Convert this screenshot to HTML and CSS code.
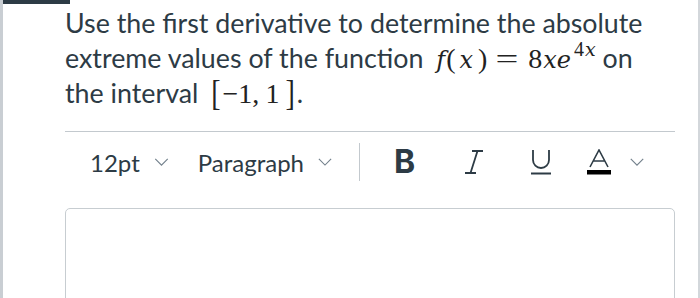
FILE: index.html
```html
<!DOCTYPE html>
<html>
<head>
<meta charset="utf-8">
<link rel="stylesheet" href="styles.css">
</head>
<body>
<div class="frame">
  <div class="tab"></div>
  <div class="content">
    <p class="question">Use the first derivative to determine the absolute extreme values of the function <span class="math"><i class="mf">f</i><span class="rm">(</span><i class="mx1">x</i><span class="rm">)</span><span class="rel">=</span><span class="rm">8</span><i class="mx2">x</i><i class="me">e</i><sup><span class="rm">4</span><i>x</i></sup></span> on the interval <span class="math"><span class="br">[</span><span class="rm">−1,</span><span class="rm one">1</span><span class="br">]</span></span>.</p>
    <div class="rule"></div>
    <div class="toolbar">
      <span class="drop size">12pt <svg class="chev" viewBox="0 0 16 9" width="15" height="8"><path d="M1 1l7 7 7-7" fill="none" stroke="#73818c" stroke-width="1.3"/></svg></span>
      <span class="drop para">Paragraph <svg class="chev" viewBox="0 0 16 9" width="14" height="8"><path d="M1 1l7 7 7-7" fill="none" stroke="#73818c" stroke-width="1.3"/></svg></span>
      <span class="sep"></span>
      <span class="btn bold">B</span>
      <svg class="btn ital" viewBox="0 0 20 24" width="20" height="24"><path d="M8 1h11M1 23h11M13.5 1L6.5 23" fill="none" stroke="#2d3b45" stroke-width="1.8"/></svg>
      <svg class="btn under" viewBox="0 0 22 26" width="22" height="26"><path d="M3 1v10a8 8 0 0 0 16 0V1" fill="none" stroke="#2d3b45" stroke-width="1.8"/><path d="M1 24.5h20" stroke="#2d3b45" stroke-width="2"/></svg>
      <svg class="btn color" viewBox="0 0 26 26" width="26" height="26"><path d="M4 18L13 1l9 17M7 12h12" fill="none" stroke="#2d3b45" stroke-width="1.6"/><rect x="1" y="21" width="24" height="4.5" fill="#000"/></svg>
      <svg class="chev last" viewBox="0 0 16 9" width="16" height="8"><path d="M1 1l7 7 7-7" fill="none" stroke="#73818c" stroke-width="1.3"/></svg>
    </div>
    <div class="editor"></div>
  </div>
</div>
</body>
</html>
```
FILE: styles.css
```css
html, body {
  margin: 0;
  padding: 0;
  background: #fff;
}
.frame {
  width: 700px;
  height: 298px;
  box-sizing: border-box;
  border-left: 3px solid #c9ced3;
  border-right: 2px solid #d3d7db;
  overflow: hidden;
}
.tab {
  width: 67px;
  height: 4px;
  background: #2d3b45;
}
.content {
  padding: 0 23px 0 62px;
}
.question {
  margin: 2px 0 0;
  width: 590px;
  font-family: Lato, "Liberation Sans", sans-serif;
  font-size: 26.8px;
  line-height: 35px;
  color: #2d3b45;
}
.math {
  font-family: "Liberation Serif", "DejaVu Serif", serif;
  font-size: 28px;
  line-height: 1;
  color: #222;
}
.math i {
  font-family: "DejaVu Serif", "Liberation Serif", serif;
  font-style: italic;
  font-size: 24px;
}
.mf {
  margin-left: 6px;
  margin-right: 1px;
}
.mx1 {
  margin-left: 4px;
  margin-right: 5px;
}
.math .rel {
  display: inline-block;
  transform: scaleX(1.45);
  margin: 0 13px 0 12px;
}
.mx2 {
  margin-left: 1px;
  margin-right: 0;
}
.me {
  margin-right: 2px;
}
.math sup {
  font-size: 20px;
  vertical-align: 0;
  position: relative;
  top: -12px;
  margin-left: 1px;
}
.math sup i {
  font-size: 19px;
  margin-left: 1px;
}
.br {
  display: inline-block;
  transform: scaleY(1.25);
  margin: 0 2px 0 6px;
}
.one {
  margin-left: 6px;
}
.rule {
  height: 1px;
  background: #c3c9ce;
  margin-top: 20px;
}
.toolbar {
  display: flex;
  align-items: center;
  height: 60px;
  padding-left: 25px;
  font-family: Lato, "Liberation Sans", sans-serif;
  font-size: 24px;
  color: #2d3b45;
}
.drop {
  display: flex;
  align-items: center;
}
.chev {
  margin-left: 14px;
}
.size {
  margin-right: 29px;
}
.para .chev {
  margin-left: 14px;
}
.sep {
  width: 1px;
  height: 38px;
  background: #c3c9ce;
  margin-left: 27px;
  margin-right: 34px;
}
.bold {
  font-family: Inter, "DejaVu Sans", sans-serif;
  font-weight: 700;
  font-size: 32px;
  line-height: 1;
}
.ital {
  margin-left: 49px;
}
.under {
  margin-left: 46px;
}
.color {
  margin-left: 34px;
}
.last {
  margin-left: 17px;
}
.editor {
  margin-top: 16px;
  height: 120px;
  border: 1px solid #c7cdd1;
  border-radius: 5px;
}
```
